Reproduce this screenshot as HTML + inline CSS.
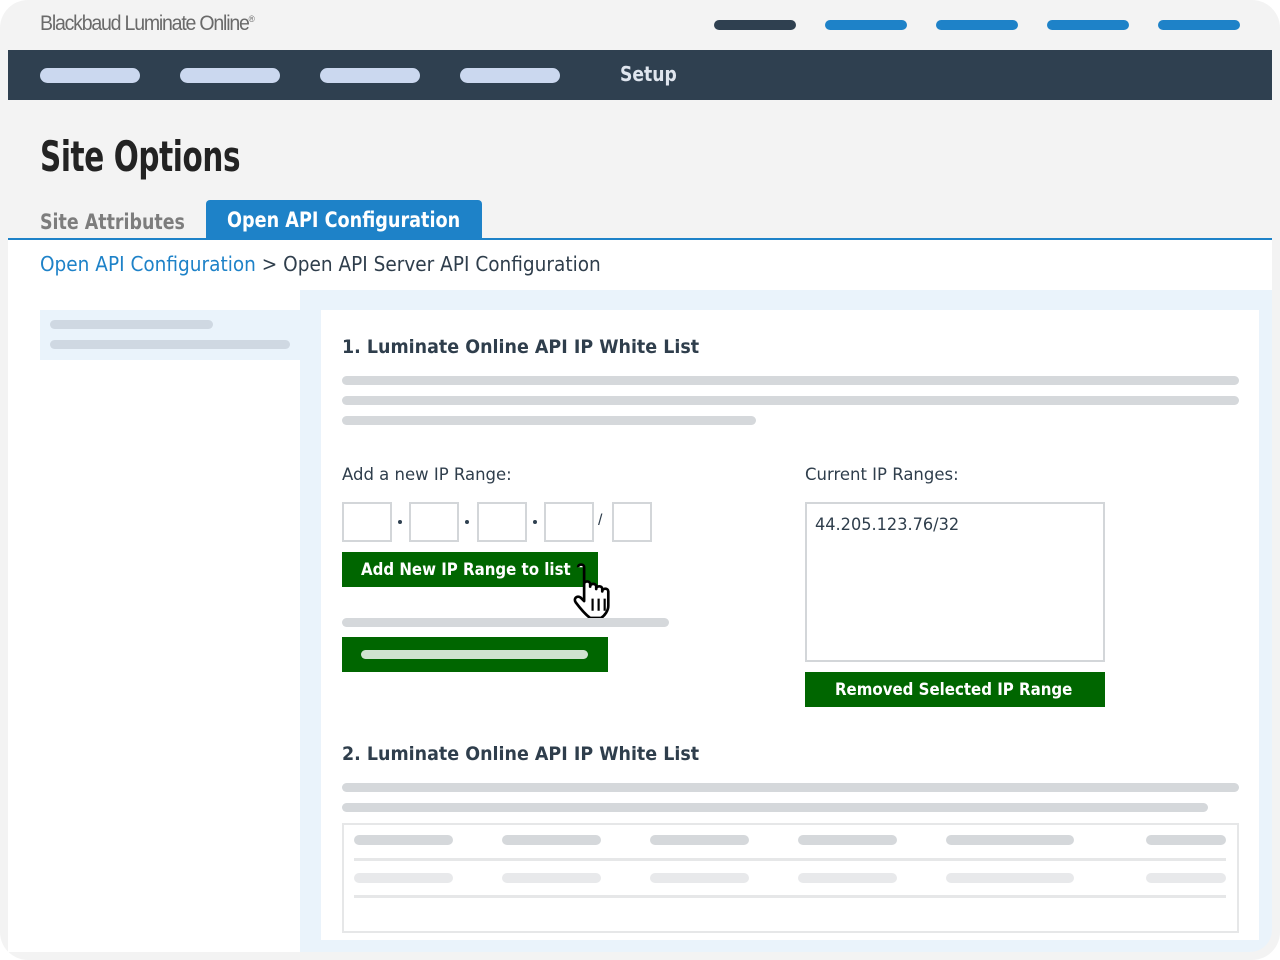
<!DOCTYPE html>
<html><head><style>
*{margin:0;padding:0;box-sizing:border-box}
body{width:1280px;height:960px;background:#fff;position:relative;overflow:hidden;font-family:"Liberation Sans","DejaVu Sans",sans-serif}
.a{position:absolute}
.frame{left:0;top:0;width:1280px;height:960px;background:#f3f3f3;border-radius:28px}
.pill{position:absolute;border-radius:6px}
.bar{position:absolute;height:9px;border-radius:5px;background:#d5d8db}
.tb{position:absolute;height:9px;border-radius:5px}
.inp{position:absolute;top:502px;width:50px;height:40px;border:2px solid #d3d6d9;background:#fff}
.dot{position:absolute;top:520px;width:4px;height:4px;border-radius:2px;background:#2f4050}
.lbl{position:absolute;font-size:17px;color:#2f3e4c;font-family:"DejaVu Sans",sans-serif}
.btn{position:absolute;background:#006600;color:#fff;font-weight:bold;font-family:"DejaVu Sans",sans-serif;font-size:16.5px;white-space:nowrap}
.btn span{position:absolute;top:0;transform:scaleX(.91);transform-origin:left}
</style></head><body>
<div class="a frame"></div>
<div class="a" style="left:40px;top:12px;font-size:21px;color:#6a6a6a;letter-spacing:-1.3px;transform:scaleX(.93);transform-origin:left">Blackbaud Luminate Online<sup style="font-size:9px">®</sup></div>
<div class="pill" style="left:714px;top:20px;width:82px;height:10px;background:#2f4050"></div>
<div class="pill" style="left:825px;top:20px;width:82px;height:10px;background:#1e82c8"></div>
<div class="pill" style="left:936px;top:20px;width:82px;height:10px;background:#1e82c8"></div>
<div class="pill" style="left:1047px;top:20px;width:82px;height:10px;background:#1e82c8"></div>
<div class="pill" style="left:1158px;top:20px;width:82px;height:10px;background:#1e82c8"></div>
<div class="a" style="left:8px;top:50px;width:1264px;height:50px;background:#2f4050"></div>
<div class="pill" style="left:40px;top:68px;width:100px;height:15px;border-radius:8px;background:#cbd8ef"></div>
<div class="pill" style="left:180px;top:68px;width:100px;height:15px;border-radius:8px;background:#cbd8ef"></div>
<div class="pill" style="left:320px;top:68px;width:100px;height:15px;border-radius:8px;background:#cbd8ef"></div>
<div class="pill" style="left:460px;top:68px;width:100px;height:15px;border-radius:8px;background:#cbd8ef"></div>
<div class="a" style="left:620px;top:62px;font-size:20px;font-weight:bold;color:#dfe5ee;font-family:'DejaVu Sans',sans-serif;transform:scaleX(.86);transform-origin:left">Setup</div>
<div class="a" style="left:40px;top:132px;font-size:42px;font-weight:bold;color:#232323;font-family:'DejaVu Sans Condensed','Liberation Sans Narrow',sans-serif;transform:scaleX(.78);transform-origin:left;letter-spacing:-0.5px">Site Options</div>
<div class="a" style="left:40px;top:210px;font-size:21px;font-weight:bold;color:#7d7d7d;font-family:'DejaVu Sans',sans-serif;transform:scaleX(.83);transform-origin:left;white-space:nowrap">Site Attributes</div>
<div class="a" style="left:206px;top:200px;width:276px;height:40px;background:#1e82c8;border-radius:4px 4px 0 0"></div>
<div class="a" style="left:227px;top:208px;font-size:21px;font-weight:bold;color:#fff;font-family:'DejaVu Sans',sans-serif;transform:scaleX(.84);transform-origin:left;white-space:nowrap">Open API Configuration</div>
<div class="a" style="left:8px;top:238px;width:1264px;height:714px;background:#fff;border-top:2px solid #1e82c8;border-radius:0 0 24px 0"></div>
<div class="a" style="left:40px;top:252px;font-size:20px;color:#2f3e4c;font-family:'DejaVu Sans',sans-serif;transform:scaleX(.925);transform-origin:left;white-space:nowrap"><span style="color:#1e82c8">Open API Configuration</span> &gt; Open API Server API Configuration</div>
<div class="a" style="left:300px;top:290px;width:972px;height:662px;background:#eaf3fb;border-radius:0 0 22px 0"></div>
<div class="a" style="left:40px;top:310px;width:260px;height:50px;background:#eaf3fb"></div>
<div class="bar" style="left:50px;top:320px;width:163px;background:#cfd8e2"></div>
<div class="bar" style="left:50px;top:340px;width:240px;background:#cfd8e2"></div>
<div class="a" style="left:321px;top:310px;width:938px;height:630px;background:#fff"></div>
<div class="a" style="left:342px;top:336px;font-size:19px;font-weight:bold;color:#2f3e4c;font-family:'DejaVu Sans',sans-serif;transform:scaleX(.92);transform-origin:left;white-space:nowrap">1. Luminate Online API IP White List</div>
<div class="bar" style="left:342px;top:376px;width:897px"></div>
<div class="bar" style="left:342px;top:396px;width:897px"></div>
<div class="bar" style="left:342px;top:416px;width:414px"></div>
<div class="lbl" style="left:342px;top:465px;transform:scaleX(.97);transform-origin:left">Add a new IP Range:</div>
<div class="inp" style="left:342px"></div><div class="dot" style="left:398px"></div>
<div class="inp" style="left:409px"></div><div class="dot" style="left:465px"></div>
<div class="inp" style="left:477px"></div><div class="dot" style="left:533px"></div>
<div class="inp" style="left:544px"></div>
<div class="a" style="left:598px;top:512px;font-size:16px;color:#2f3e4c">/</div>
<div class="inp" style="left:612px;width:40px"></div>
<div class="btn" style="left:342px;top:552px;width:256px;height:35px;line-height:35px"><span style="left:19px">Add New IP Range to list</span></div>
<svg class="a" style="left:566px;top:560px" width="58" height="58" viewBox="0 0 48 48"><path d="M10 6c0-3 5-3 5 0v14c0-3 5-3 5 0v2c0-3 5-3 5 0v2c0-3 5-3 5 0v2c0-3 5-3 5 0v12c0 4-3 8-6 10H20c-4-3-9-9-12-13-2-3 1-6 4-4l3 3V6" fill="#fff" stroke="#000" stroke-width="2.2" stroke-linejoin="round"/><path d="M22 32v10M27 32v10M32 32v10" stroke="#000" stroke-width="1.8"/></svg>
<div class="bar" style="left:342px;top:618px;width:327px"></div>
<div class="a" style="left:342px;top:637px;width:266px;height:35px;background:#006600"></div>
<div class="tb" style="left:361px;top:650px;width:227px;background:#cfe3cf"></div>
<div class="lbl" style="left:805px;top:465px;transform:scaleX(.97);transform-origin:left">Current IP Ranges:</div>
<div class="a" style="left:805px;top:502px;width:300px;height:160px;border:2px solid #d3d6d9;padding:11px 8px;font-size:17px;color:#2f3e4c;font-family:'DejaVu Sans',sans-serif"><span style="display:inline-block;transform:scaleX(.95);transform-origin:left">44.205.123.76/32</span></div>
<div class="btn" style="left:805px;top:672px;width:300px;height:35px;line-height:35px"><span style="left:30px">Removed Selected IP Range</span></div>
<div class="a" style="left:342px;top:743px;font-size:19px;font-weight:bold;color:#2f3e4c;font-family:'DejaVu Sans',sans-serif;transform:scaleX(.92);transform-origin:left;white-space:nowrap">2. Luminate Online API IP White List</div>
<div class="bar" style="left:342px;top:783px;width:897px"></div>
<div class="bar" style="left:342px;top:803px;width:866px"></div>
<div class="a" style="left:342px;top:823px;width:897px;height:110px;border:2px solid #e6e7e8"></div>
<div class="bar" style="left:354px;top:835px;width:99px;height:10px"></div>
<div class="bar" style="left:502px;top:835px;width:99px;height:10px"></div>
<div class="bar" style="left:650px;top:835px;width:99px;height:10px"></div>
<div class="bar" style="left:798px;top:835px;width:99px;height:10px"></div>
<div class="bar" style="left:946px;top:835px;width:128px;height:10px"></div>
<div class="bar" style="left:1146px;top:835px;width:80px;height:10px"></div>
<div class="a" style="left:354px;top:858px;width:872px;height:3px;background:#e6e7e8"></div>
<div class="bar" style="left:354px;top:873px;width:99px;height:10px;background:#e8e9eb"></div>
<div class="bar" style="left:502px;top:873px;width:99px;height:10px;background:#e8e9eb"></div>
<div class="bar" style="left:650px;top:873px;width:99px;height:10px;background:#e8e9eb"></div>
<div class="bar" style="left:798px;top:873px;width:99px;height:10px;background:#e8e9eb"></div>
<div class="bar" style="left:946px;top:873px;width:128px;height:10px;background:#e8e9eb"></div>
<div class="bar" style="left:1146px;top:873px;width:80px;height:10px;background:#e8e9eb"></div>
<div class="a" style="left:354px;top:895px;width:872px;height:3px;background:#e6e7e8"></div>
</body></html>
